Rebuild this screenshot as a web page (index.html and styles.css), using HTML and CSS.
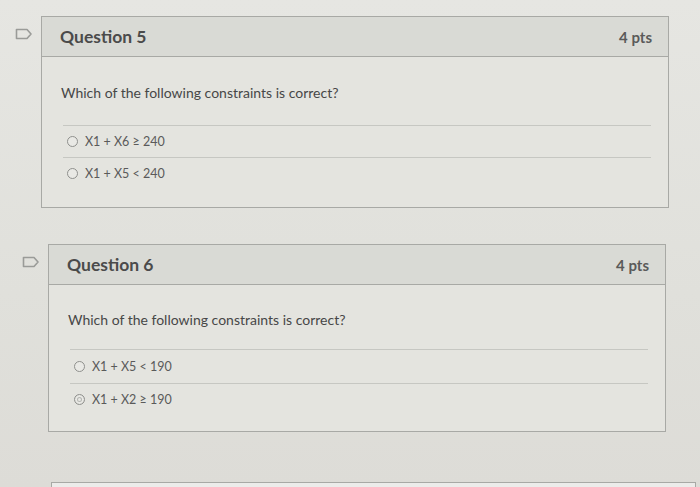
FILE: index.html
```html
<!DOCTYPE html>
<html lang="en">
<head>
    <meta charset="UTF-8">
    <meta name="viewport" content="width=device-width, initial-scale=1.0">
    <title>Quiz</title>
    <link rel="stylesheet" href="styles.css">
</head>
<body>
    <main class="quiz">
        <section class="question question-5">
            <div class="question-flag">
                <svg width="18" height="12" viewBox="0 0 18 12"><path d="M1.5 1.5 H12 L16 6 L12 10.5 H1.5 Z" fill="none" stroke="#9a9b98" stroke-width="1.6" stroke-linejoin="round"/></svg>
            </div>
            <div class="question-card">
                <div class="question-header">
                    <h2 class="question-title">Question 5</h2>
                    <span class="question-points">4 pts</span>
                </div>
                <div class="question-body">
                    <p class="question-text">Which of the following constraints is correct?</p>
                    <div class="answers">
                        <label class="answer"><span class="radio"></span>X1 + X6 ≥ 240</label>
                        <label class="answer"><span class="radio"></span>X1 + X5 &lt; 240</label>
                    </div>
                </div>
            </div>
        </section>

        <section class="question question-6">
            <div class="question-flag">
                <svg width="18" height="12" viewBox="0 0 18 12"><path d="M1.5 1.5 H12 L16 6 L12 10.5 H1.5 Z" fill="none" stroke="#9a9b98" stroke-width="1.6" stroke-linejoin="round"/></svg>
            </div>
            <div class="question-card">
                <div class="question-header">
                    <h2 class="question-title">Question 6</h2>
                    <span class="question-points">4 pts</span>
                </div>
                <div class="question-body">
                    <p class="question-text">Which of the following constraints is correct?</p>
                    <div class="answers">
                        <label class="answer"><span class="radio"></span>X1 + X5 &lt; 190</label>
                        <label class="answer"><span class="radio radio-focus"></span>X1 + X2 ≥ 190</label>
                    </div>
                </div>
            </div>
        </section>

        <div class="next-question"></div>
    </main>
</body>
</html>
```

FILE: styles.css
```css
body {
    font-family: Lato, "Open Sans", sans-serif;
    background: linear-gradient(#e6e6e2, #e0e0db 60%, #dddcd7);
    color: #4a4a4a;
    margin: 0;
    padding: 0;
    height: 487px;
    overflow: hidden;
}
.quiz {
    padding-top: 16px;
}
.question {
    display: flex;
    align-items: flex-start;
}
.question-5 {
    margin-left: 15px;
}
.question-6 {
    margin-left: 22px;
    margin-top: 36px;
}
.question-flag {
    width: 26px;
    padding-top: 12px;
    flex-shrink: 0;
}
.question-flag svg {
    display: block;
}
.question-card {
    border: 1px solid #a8a9a5;
    background-color: #e4e4df;
}
.question-5 .question-card {
    width: 626px;
}
.question-6 .question-card {
    width: 616px;
}
.question-header {
    height: 39px;
    display: flex;
    justify-content: space-between;
    align-items: center;
    padding: 0 16px 0 18px;
    background-color: #d9dad5;
    border-bottom: 1px solid #a8a9a5;
}
.question-title {
    margin: 0;
    font-size: 17.5px;
    font-weight: 700;
    color: #4b4b4b;
}
.question-points {
    font-size: 15px;
    font-weight: 700;
    color: #5a5a5a;
}
.question-body {
    padding: 26px 17px 18px 19px;
}
.question-text {
    margin: 0;
    font-size: 14px;
    line-height: 20px;
    color: #474747;
}
.answers {
    margin-top: 22px;
    margin-left: 2px;
}
.question-6 .question-body {
    padding-top: 25px;
    padding-bottom: 16px;
}
.question-6 .answers {
    margin-top: 19px;
}
.answer {
    display: flex;
    align-items: center;
    height: 31px;
    padding-left: 4px;
    border-top: 1px solid #c6c7c2;
    font-size: 12.5px;
    color: #5a5a5a;
}
.question-6 .answer:first-child {
    height: 33px;
}
.radio {
    width: 9px;
    height: 9px;
    border: 1px solid #8f908d;
    border-radius: 50%;
    margin-right: 7px;
    background-color: #e9e9e5;
}
.radio-focus {
    box-shadow: inset 0 0 0 2px #e9e9e5, inset 0 0 0 3px #b5b6b2;
}
.next-question {
    margin-top: 50px;
    margin-left: 51px;
    width: 643px;
    height: 20px;
    border: 1px solid #a8a9a5;
    background-color: #ececea;
}
```
